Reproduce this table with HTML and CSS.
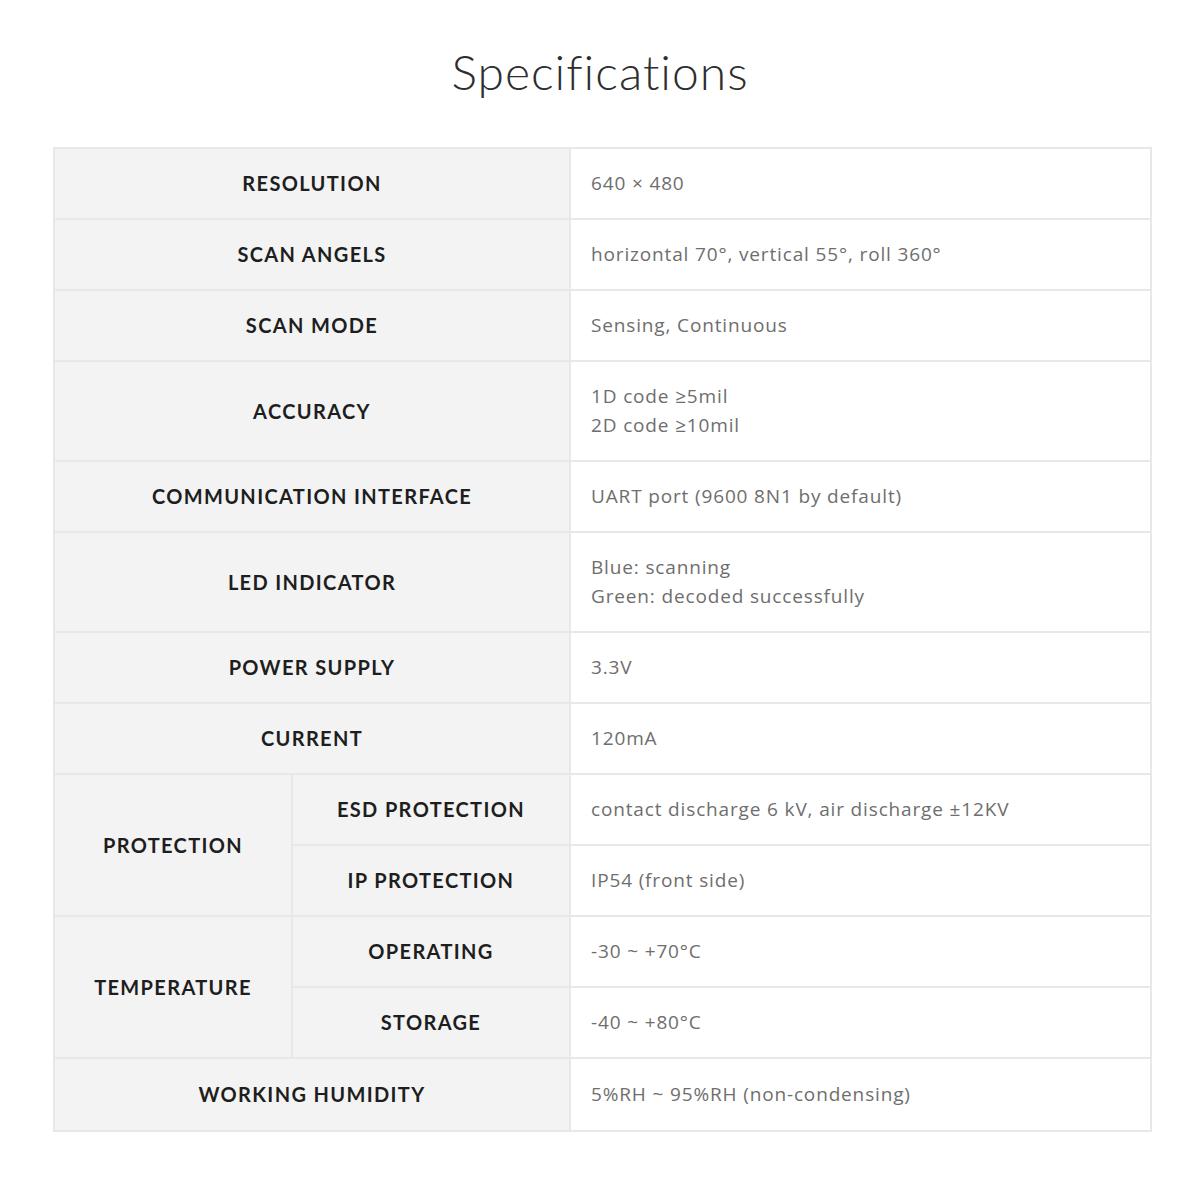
FILE: index.html
```html
<!DOCTYPE html>
<html>
<head>
<meta charset="utf-8">
<link rel="stylesheet" href="styles.css">
</head>
<body>
<h1 class="title">Specifications</h1>
<table class="specs">
  <colgroup><col class="c1"><col class="c2"><col class="c3"></colgroup>
  <tr><th colspan="2">RESOLUTION</th><td>640 × 480</td></tr>
  <tr><th colspan="2">SCAN ANGELS</th><td>horizontal 70°, vertical 55°, roll 360°</td></tr>
  <tr><th colspan="2">SCAN MODE</th><td>Sensing, Continuous</td></tr>
  <tr><th colspan="2">ACCURACY</th><td>1D code ≥5mil<br>2D code ≥10mil</td></tr>
  <tr><th colspan="2">COMMUNICATION INTERFACE</th><td>UART port (9600 8N1 by default)</td></tr>
  <tr><th colspan="2">LED INDICATOR</th><td>Blue: scanning<br>Green: decoded successfully</td></tr>
  <tr><th colspan="2">POWER SUPPLY</th><td>3.3V</td></tr>
  <tr><th colspan="2">CURRENT</th><td>120mA</td></tr>
  <tr><th rowspan="2">PROTECTION</th><th>ESD PROTECTION</th><td>contact discharge 6 kV, air discharge ±12KV</td></tr>
  <tr><th>IP PROTECTION</th><td>IP54 (front side)</td></tr>
  <tr><th rowspan="2">TEMPERATURE</th><th>OPERATING</th><td>-30 ~ +70°C</td></tr>
  <tr><th>STORAGE</th><td>-40 ~ +80°C</td></tr>
  <tr><th colspan="2" class="last">WORKING HUMIDITY</th><td class="last">5%RH ~ 95%RH (non-condensing)</td></tr>
</table>
</body>
</html>
```

FILE: styles.css
```css
html, body {
  margin: 0;
  padding: 0;
  background: #ffffff;
}
body {
  font-family: Lato, "Open Sans", sans-serif;
  width: 1200px;
}
.title {
  margin: 0;
  padding-top: 42px;
  height: 147px;
  box-sizing: border-box;
  text-align: center;
  font-family: Lato, sans-serif;
  font-weight: 300;
  font-size: 48px;
  line-height: 60px;
  color: #2e2e2e;
  letter-spacing: 1px;
}
.specs {
  margin: 0 0 0 53px;
  width: 1099px;
  border-collapse: collapse;
  table-layout: fixed;
  border: 2px solid #ececec;
}
.c1 { width: 238px; }
.c2 { width: 278px; }
.c3 { width: 581px; }
.specs th, .specs td {
  border: 2px solid #e8e8e8;
  padding: 20px 0;
  line-height: 29px;
  font-size: 20px;
}
.specs .last {
  padding-top: 21px;
  padding-bottom: 21px;
}
.specs th {
  background: #f3f3f3;
  color: #1e1e1e;
  font-weight: 700;
  text-align: center;
  letter-spacing: 1.35px;
}
.specs td {
  background: #ffffff;
  color: #6e6e6e;
  font-family: "Open Sans", sans-serif;
  font-size: 19px;
  font-weight: 400;
  text-align: left;
  padding-left: 20px;
  letter-spacing: 0.85px;
}
```
